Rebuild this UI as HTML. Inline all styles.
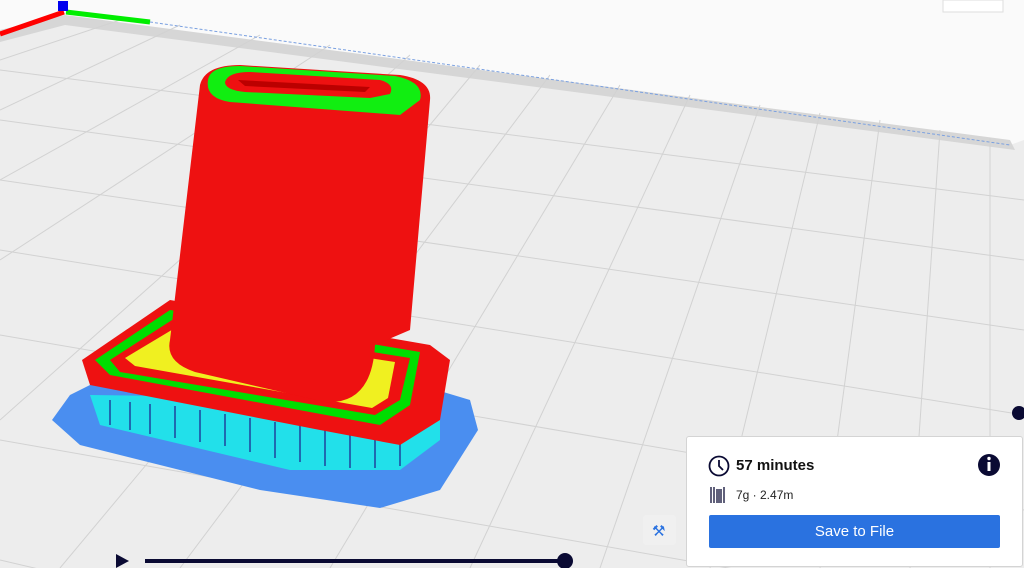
<!DOCTYPE html>
<html><head><style>
html,body{margin:0;width:1024px;height:568px;overflow:hidden}
body{background:#ececec;font-family:"Liberation Sans",sans-serif;position:relative}
svg{position:absolute;left:0;top:0}
.card{position:absolute;left:686px;top:436px;width:335px;height:129px;background:#fff;border:1px solid #d4d4d4;border-radius:3px;overflow:hidden}
.btn{position:absolute;left:22px;top:78px;width:291px;height:33px;background:#2a72e0;border-radius:2px;color:#fff;font-size:15px;text-align:center;line-height:33px}
</style></head><body>
<svg width="1024" height="568" viewBox="0 0 1024 568">
<rect width="1024" height="568" fill="#ededed"/>
<polygon points="0,0 1024,0 1024,140 1010,145 65,15 0,30" fill="#fafafa"/>
<polygon points="0,30 65,15 1010,140 1015,150 65,25 0,42" fill="#d6d6d6"/>
<g stroke="#d2d2d2" stroke-width="1" fill="none">
<path d="M0,70 L1024,200 M0,120 L1024,260 M0,180 L1024,330 M0,250 L1024,415 M0,335 L1024,510 M0,440 L1024,620 M0,560 L600,700"/>
<path d="M180,25 L0,110 M330,45 L0,260 M480,65 L60,568 M620,85 L330,568 M760,105 L600,568 M880,120 L820,568 M990,138 L990,568"/>
<path d="M120,20 L0,60 M260,35 L0,180 M410,55 L0,420 M550,75 L180,568 M690,95 L470,568 M820,113 L710,568 M940,130 L910,568"/>
</g>
<line x1="150" y1="22" x2="1010" y2="145" stroke="#7aa0e0" stroke-width="1" stroke-dasharray="3,2"/>
<line x1="0" y1="34" x2="64" y2="12" stroke="#ff0000" stroke-width="5"/>
<line x1="66" y1="12" x2="150" y2="22" stroke="#00ee00" stroke-width="5"/>
<rect x="58" y="1" width="10" height="10" fill="#0000ee"/>
<path d="M70,395 L100,380 L420,385 L470,400 L478,430 L440,490 L380,508 L260,490 L80,445 L52,420 Z" fill="#4a8ef0"/>
<path d="M90,395 L440,400 L440,440 L400,470 L290,470 L100,425 Z" fill="#22e0ea"/>
<g stroke="#1f6ab0" stroke-width="2">
<path d="M110,400 v25 M130,402 v28 M150,404 v30 M175,406 v32 M200,410 v32 M225,414 v32 M250,418 v34 M275,422 v36 M300,426 v36 M325,430 v36 M350,432 v36 M375,434 v34 M400,436 v30"/>
</g>
<path d="M82,360 L170,300 L430,345 L450,360 L440,420 L400,445 L320,430 L90,385 Z" fill="#ee1111"/>
<path d="M95,360 L170,310 L420,352 L410,405 L380,425 L110,375 Z" fill="#00dd00"/>
<path d="M110,360 L172,320 L410,358 L400,400 L375,415 L120,372 Z" fill="#ee1111"/>
<path d="M125,358 L175,328 L395,362 L388,398 L372,408 L135,366 Z" fill="#f0f020"/>
<path d="M200,85 Q205,65 240,65 L400,75 Q432,80 430,100 L410,330 L375,345 Q372,405 325,402 L195,372 Q165,362 170,340 Z" fill="#ee1111"/>
<path d="M208,80 Q210,66 240,66 L395,76 Q425,82 420,100 L400,115 L230,102 Q205,98 208,80 Z" fill="#11ee11"/>
<path d="M225,82 Q228,72 250,72 L380,80 Q395,84 390,94 L370,98 L245,92 Q225,90 225,82 Z" fill="#ee1111"/>
<path d="M238,80 L370,87 L365,92 L245,86 Z" fill="#bb0000"/>
<polygon points="116,554 116,568 129,561" fill="#0a0a33"/>
<line x1="145" y1="561" x2="565" y2="561" stroke="#0a0a33" stroke-width="4"/>
<circle cx="565" cy="561" r="8" fill="#0a0a33"/>
<circle cx="1019" cy="413" r="7" fill="#0a0a33"/>
<rect x="943" y="0" width="60" height="12" fill="#fff" stroke="#ddd"/>
<rect x="643" y="515" width="33" height="30" rx="3" fill="#f0f0f0"/>
<text x="652" y="536" font-size="15" fill="#2a72e0">⚒</text>
</svg>
<div class="card">
<svg width="335" height="70" style="position:absolute;left:0;top:0">
<circle cx="32" cy="29" r="9.5" fill="none" stroke="#0a0a33" stroke-width="1.8"/>
<path d="M32,23 V29 L36,33" fill="none" stroke="#0a0a33" stroke-width="1.8"/>
<circle cx="302" cy="28" r="11" fill="#0a0a33"/>
<rect x="300.5" y="25" width="3" height="9" fill="#fff"/><circle cx="302" cy="21.5" r="1.7" fill="#fff"/>
<g stroke="#0a0a33" stroke-width="1.3"><path d="M24,50v16 M27,50v16 M30,52v14 M32,52v14 M34,52v14 M37,50v16"/></g>
</svg>
<div style="position:absolute;left:49px;top:20px;font-size:15px;font-weight:bold;color:#111">57 minutes</div>
<div style="position:absolute;left:49px;top:51px;font-size:12px;color:#222">7g · 2.47m</div>
<div class="btn">Save to File</div>
</div>
</body></html>
